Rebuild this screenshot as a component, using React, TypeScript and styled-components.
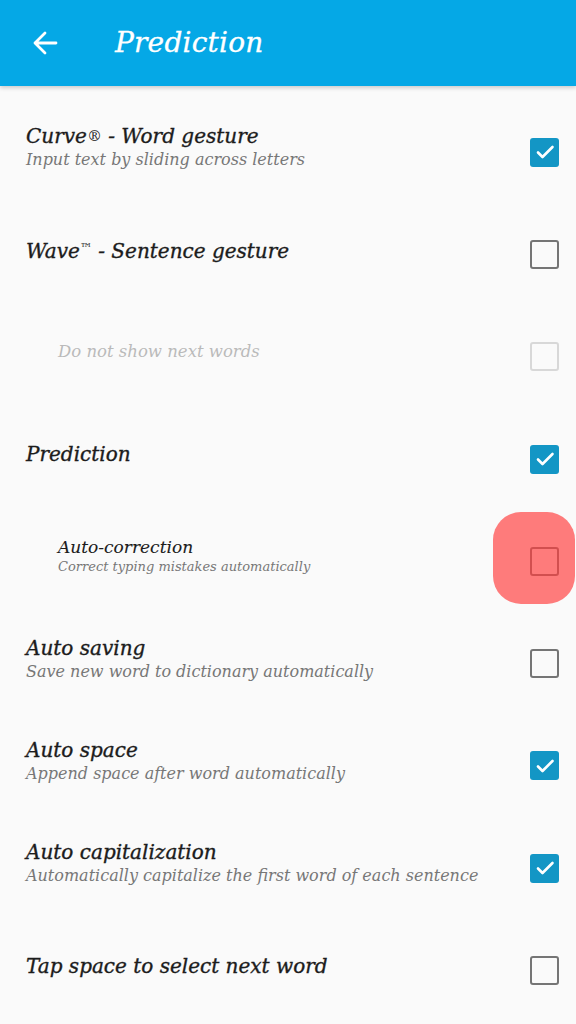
import styled, { createGlobalStyle } from "styled-components";

const GlobalStyle = createGlobalStyle`
  html, body {
    margin: 0;
    padding: 0;
    background: #fafafa;
  }
  body {
    font-family: "DejaVu Serif", "Liberation Serif", serif;
  }
`;

type Setting = {
  title: string;
  mark?: string;
  rest?: string;
  summary?: string;
  checked: boolean;
  indent?: boolean;
  disabled?: boolean;
  small?: boolean;
  highlight?: boolean;
};

const settings: Setting[] = [
  {
    title: "Curve",
    mark: "®",
    rest: " - Word gesture",
    summary: "Input text by sliding across letters",
    checked: true,
  },
  { title: "Wave", mark: "™", rest: " - Sentence gesture", checked: false },
  { title: "Do not show next words", checked: false, indent: true, disabled: true },
  { title: "Prediction", checked: true },
  {
    title: "Auto-correction",
    summary: "Correct typing mistakes automatically",
    checked: false,
    indent: true,
    small: true,
    highlight: true,
  },
  { title: "Auto saving", summary: "Save new word to dictionary automatically", checked: false },
  { title: "Auto space", summary: "Append space after word automatically", checked: true },
  {
    title: "Auto capitalization",
    summary: "Automatically capitalize the first word of each sentence",
    checked: true,
  },
  { title: "Tap space to select next word", checked: false },
];

const Page = styled.div`
  width: 576px;
  height: 1024px;
  overflow: hidden;
  background: #fafafa;
`;

const AppBar = styled.header`
  height: 86px;
  background: #05a8e6;
  display: flex;
  align-items: center;
  box-shadow: 0 2px 4px rgba(0, 0, 0, 0.18);
  position: relative;
  z-index: 1;
`;

const BackButton = styled.div`
  width: 26px;
  height: 26px;
  margin-left: 32px;
  margin-right: 57px;
  display: flex;
`;

const Title = styled.h1`
  margin: 0 0 1px;
  color: #ffffff;
  font-size: 28px;
  font-style: italic;
  font-weight: normal;
  letter-spacing: 0.2px;
  -webkit-text-stroke: 0.3px #ffffff;
`;

const List = styled.div`
  padding-top: 15px;
`;

const Row = styled.div<{ $indent?: boolean }>`
  height: 102.3px;
  display: flex;
  align-items: center;
  padding-left: ${(p) => (p.$indent ? "58px" : "26px")};
  padding-right: 17px;
  box-sizing: border-box;
  position: relative;
`;

const TextBlock = styled.div`
  flex: 1;
  display: flex;
  flex-direction: column;
  padding-bottom: 10px;
`;

const RowTitle = styled.div<{ $disabled?: boolean; $small?: boolean }>`
  font-style: italic;
  font-size: ${(p) => (p.$disabled ? "16.5px" : p.$small ? "17px" : "20px")};
  color: ${(p) => (p.$disabled ? "#bababa" : "#1c1c1c")};
  line-height: ${(p) => (p.$small ? "22px" : "26px")};
  -webkit-text-stroke: ${(p) => (p.$disabled ? "0" : p.$small ? "0.1px" : "0.35px")}
    currentColor;
  white-space: nowrap;
`;

const Mark = styled.span<{ $tm?: boolean }>`
  font-size: ${(p) => (p.$tm ? "12px" : "15px")};
  vertical-align: ${(p) => (p.$tm ? "6px" : "2px")};
  -webkit-text-stroke: 0;
`;

const Summary = styled.div<{ $small?: boolean }>`
  font-style: italic;
  font-size: ${(p) => (p.$small ? "13px" : "16px")};
  color: #777777;
  line-height: ${(p) => (p.$small ? "18px" : "22px")};
  white-space: nowrap;
`;

const Box = styled.div<{ $checked: boolean; $disabled?: boolean }>`
  width: 29px;
  height: 29px;
  box-sizing: border-box;
  border-radius: 3px;
  flex-shrink: 0;
  display: flex;
  align-items: center;
  justify-content: center;
  background: ${(p) => (p.$checked ? "#1396c5" : "transparent")};
  border: ${(p) =>
    p.$checked ? "none" : `2.5px solid ${p.$disabled ? "#d8d8d8" : "#757575"}`};
`;

const Highlight = styled.div`
  position: absolute;
  left: 493px;
  top: 2px;
  width: 82px;
  height: 92px;
  border-radius: 28px;
  background: rgba(255, 62, 62, 0.68);
`;

const ArrowIcon = () => (
  <svg width="26" height="26" viewBox="0 0 26 26" fill="none">
    <path
      d="M24 13H3M13 3L3 13l10 10"
      stroke="#ffffff"
      strokeWidth="2.8"
      strokeLinecap="round"
      strokeLinejoin="round"
    />
  </svg>
);

const CheckIcon = () => (
  <svg width="22" height="22" viewBox="0 0 22 22" fill="none">
    <path
      d="M4 11.5l4.5 4.5L18.5 6"
      stroke="#ffffff"
      strokeWidth="2.6"
      strokeLinecap="round"
      strokeLinejoin="round"
    />
  </svg>
);

export default function App() {
  return (
    <Page>
      <GlobalStyle />
      <AppBar>
        <BackButton>
          <ArrowIcon />
        </BackButton>
        <Title>Prediction</Title>
      </AppBar>
      <List>
        {settings.map((s) => (
          <Row key={s.title} $indent={s.indent}>
            <TextBlock>
              <RowTitle $disabled={s.disabled} $small={s.small}>
                {s.title}
                {s.mark && <Mark $tm={s.mark === "™"}>{s.mark}</Mark>}
                {s.rest}
              </RowTitle>
              {s.summary && <Summary $small={s.small}>{s.summary}</Summary>}
            </TextBlock>
            <Box $checked={s.checked} $disabled={s.disabled}>
              {s.checked && <CheckIcon />}
            </Box>
            {s.highlight && <Highlight />}
          </Row>
        ))}
      </List>
    </Page>
  );
}
